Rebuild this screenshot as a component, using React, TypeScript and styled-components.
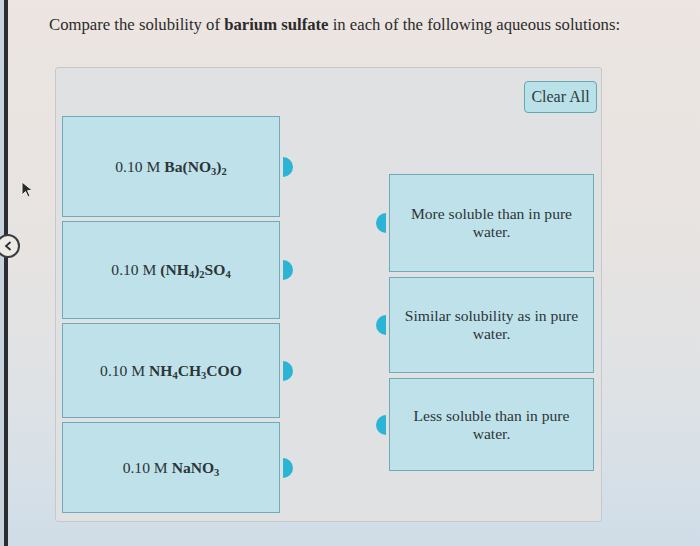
import React from "react";
import styled, { createGlobalStyle } from "styled-components";

const Global = createGlobalStyle`
  html, body { margin: 0; padding: 0; }
  body {
    width: 700px;
    height: 546px;
    overflow: hidden;
    font-family: "Liberation Serif", "Times New Roman", serif;
    background: linear-gradient(180deg, #ece5e1 0%, #e7e3e1 45%, #dde2e6 75%, #cfdde8 100%);
  }
`;

const Page = styled.div`
  position: relative;
  display: flex;
  height: 546px;
`;

const Rail = styled.div`
  position: relative;
  width: 4px;
  flex: none;
  background: #c9d3db;
  border-right: 4px solid #2b2f33;
`;

const RailToggle = styled.div`
  position: absolute;
  top: 234px;
  left: -4px;
  width: 20px;
  height: 20px;
  border-radius: 50%;
  background: #eeeae6;
  border: 2px solid #3a3d40;
  display: flex;
  align-items: center;
  justify-content: center;
`;

const Cursor = styled.svg`
  position: absolute;
  left: 21px;
  top: 181px;
`;

const Main = styled.div`
  flex: 1;
  padding: 14px 0 0 41px;
`;

const Title = styled.h1`
  margin: 0;
  font-size: 16.7px;
  font-weight: normal;
  color: #2b2b2b;
  line-height: 21px;
  b { font-weight: bold; }
`;

const Panel = styled.div`
  margin: 32px 0 0 6px;
  width: 547px;
  height: 455px;
  box-sizing: border-box;
  background: #e0e1e2;
  border: 1px solid #c6c8ca;
  border-radius: 3px;
  display: flex;
  padding: 13px 4px 0 6px;
`;

const LeftColumn = styled.div`
  width: 218px;
  padding-top: 35px;
  display: flex;
  flex-direction: column;
  gap: 4px;
`;

const RightColumn = styled.div`
  margin-left: auto;
  width: 208px;
  display: flex;
  flex-direction: column;
  align-items: flex-end;
`;

const ClearButton = styled.button`
  width: 73px;
  height: 32px;
  box-sizing: border-box;
  background: #b9e1e7;
  border: 1px solid #62a9b4;
  border-radius: 4px;
  font-family: "Liberation Serif", "Times New Roman", serif;
  font-size: 16px;
  color: #2f3a3e;
  padding: 0;
  margin-bottom: 61px;
`;

const Targets = styled.div`
  width: 205px;
  align-self: flex-start;
  display: flex;
  flex-direction: column;
  gap: 5px;
`;

const Card = styled.div<{ $h: number }>`
  position: relative;
  height: ${(p) => p.$h}px;
  box-sizing: border-box;
  background: #bfe2ea;
  border: 1px solid #6eaab7;
  display: flex;
  align-items: center;
  justify-content: center;
  text-align: center;
  padding: 0 10px;
`;

const CardText = styled.span`
  font-size: 15.6px;
  line-height: 18px;
  color: #2c3538;
  b { font-weight: bold; }
  sub { font-size: 10.5px; vertical-align: -3px; line-height: 0; font-weight: bold; }
`;

const Tab = styled.span<{ $side: "left" | "right" }>`
  position: absolute;
  top: 50%;
  width: 10px;
  height: 20px;
  margin-top: -10px;
  background: #2cb4d4;
  ${(p) =>
    p.$side === "right"
      ? "right: -14px; border-radius: 0 10px 10px 0;"
      : "left: -14px; border-radius: 10px 0 0 10px;"}
`;

const sources: { id: string; node: React.ReactNode; h: number }[] = [
  { id: "ba", h: 101, node: <>0.10 M <b>Ba(NO<sub>3</sub>)<sub>2</sub></b></> },
  { id: "nh4so4", h: 98, node: <>0.10 M <b>(NH<sub>4</sub>)<sub>2</sub>SO<sub>4</sub></b></> },
  { id: "acetate", h: 95, node: <>0.10 M <b>NH<sub>4</sub>CH<sub>3</sub>COO</b></> },
  { id: "nano3", h: 91, node: <>0.10 M <b>NaNO<sub>3</sub></b></> },
];

const targets = [
  { id: "more", h: 98, text: "More soluble than in pure water." },
  { id: "similar", h: 96, text: "Similar solubility as in pure water." },
  { id: "less", h: 93, text: "Less soluble than in pure water." },
];

export default function App() {
  return (
    <>
      <Global />
      <Page>
        <Rail>
          <RailToggle>
            <svg width="10" height="10" viewBox="0 0 10 10">
              <path d="M7 1.5 L3 5 L7 8.5" fill="none" stroke="#2b2f33" strokeWidth="1.8" strokeLinecap="round" />
            </svg>
          </RailToggle>
        </Rail>
        <Main>
          <Title>
            Compare the solubility of <b>barium sulfate</b> in each of the following aqueous solutions:
          </Title>
          <Panel>
            <LeftColumn>
              {sources.map((s) => (
                <Card key={s.id} $h={s.h}>
                  <CardText>{s.node}</CardText>
                  <Tab $side="right" />
                </Card>
              ))}
            </LeftColumn>
            <RightColumn>
              <ClearButton>Clear All</ClearButton>
              <Targets>
                {targets.map((t) => (
                  <Card key={t.id} $h={t.h}>
                    <CardText>{t.text}</CardText>
                    <Tab $side="left" />
                  </Card>
                ))}
              </Targets>
            </RightColumn>
          </Panel>
        </Main>
        <Cursor width="14" height="18" viewBox="0 0 14 18">
          <path d="M1 1 L1 14 L4.5 10.5 L7 16 L9 15 L6.6 9.6 L11.5 9.6 Z" fill="#2a2a2a" stroke="#f3f0ee" strokeWidth="1" />
        </Cursor>
      </Page>
    </>
  );
}
